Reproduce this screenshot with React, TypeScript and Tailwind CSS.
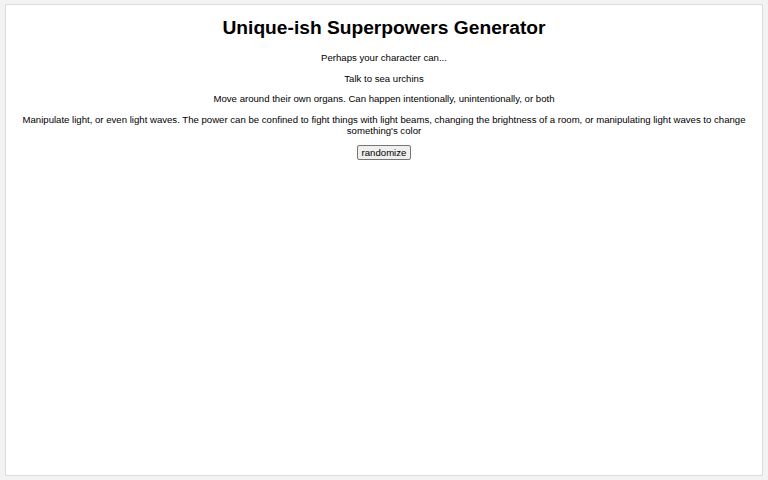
const powers = [
  'Talk to sea urchins',
  'Move around their own organs. Can happen intentionally, unintentionally, or both',
  "Manipulate light, or even light waves. The power can be confined to fight things with light beams, changing the brightness of a room, or manipulating light waves to change something's color",
];

export default function App() {
  return (
    <div className="h-[480px] bg-[#f3f3f3] px-[5px] pt-[4px] pb-[4px] font-['Liberation_Sans',Arial,sans-serif] text-black">
      <div className="h-full border border-[#dcdcdc] bg-white px-[10px] text-center text-[9.6px] leading-[11px]">
        <h1 className="mt-[12px] mb-[13px] text-[19.2px] leading-[22px] font-bold">
          Unique-ish Superpowers Generator
        </h1>
        <p className="my-[9.6px]">Perhaps your character can...</p>
        {powers.map((p) => (
          <p key={p} className="my-[9.6px]">
            {p}
          </p>
        ))}
        <button className="rounded-[2px] border border-[#767676] bg-[#efefef] px-[4px] py-[1px] text-[9.6px] leading-[11px]">
          randomize
        </button>
      </div>
    </div>
  );
}
